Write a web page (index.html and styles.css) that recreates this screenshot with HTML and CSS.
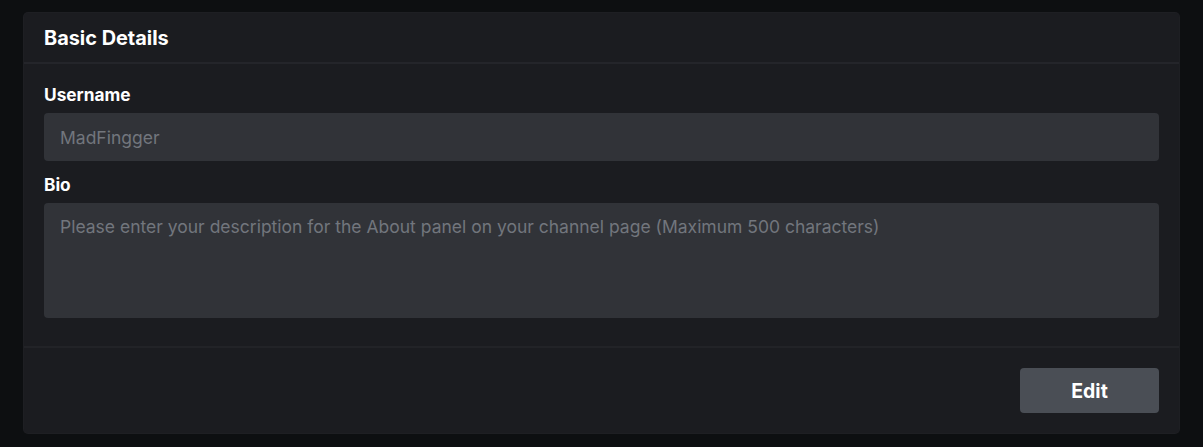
FILE: index.html
```html
<!DOCTYPE html>
<html>
<head>
<meta charset="utf-8">
<link rel="stylesheet" href="styles.css">
</head>
<body>
<section class="card">
  <header class="card-head">
    <h2 class="card-title">Basic Details</h2>
  </header>
  <div class="card-body">
    <label class="field-label" for="username">Username</label>
    <input class="field-input" id="username" type="text" placeholder="MadFingger">
    <label class="field-label bio-label" for="bio">Bio</label>
    <textarea class="field-area" id="bio" placeholder="Please enter your description for the About panel on your channel page (Maximum 500 characters)"></textarea>
  </div>
  <footer class="card-foot">
    <button class="btn-edit" type="button">Edit</button>
  </footer>
</section>
</body>
</html>
```
FILE: styles.css
```css
html, body {
  margin: 0;
  padding: 0;
  background: #0d0f11;
}
body {
  padding: 13px 24px 14px;
  font-family: Inter, "Noto Sans", sans-serif;
  color: #fff;
}
.card {
  background: #1b1c20;
  border-radius: 4px;
  box-shadow: 0 0 0 1px #1e1f23;
}
.card-head {
  height: 49px;
  display: flex;
  align-items: center;
  padding: 0 20px;
  border-bottom: 2px solid #24252a;
}
.card-title {
  margin: 0;
  font-size: 19.9px;
  font-weight: 700;
}
.card-body {
  display: flex;
  flex-direction: column;
  padding: 21px 20px 28px;
  border-bottom: 2px solid #222327;
}
.field-label {
  font-size: 17.3px;
  font-weight: 700;
  line-height: 20px;
  margin-bottom: 8px;
}
.bio-label {
  margin-top: 14px;
}
.field-input, .field-area {
  box-sizing: border-box;
  width: 100%;
  border: none;
  outline: none;
  border-radius: 4px;
  background: #313338;
  color: #d0d2d6;
  font-family: inherit;
  font-size: 17.5px;
  padding: 0 16px;
  margin: 0;
}
.field-input {
  height: 48px;
}
.field-area {
  height: 115px;
  padding-top: 14px;
  resize: none;
  line-height: 20px;
}
.field-input::placeholder, .field-area::placeholder {
  color: #72767d;
  opacity: 1;
}
.card-foot {
  display: flex;
  justify-content: flex-end;
  padding: 20px 20px 20px;
}
.btn-edit {
  width: 139px;
  height: 45px;
  border: none;
  border-radius: 4px;
  background: #4a4e55;
  color: #fff;
  font-family: inherit;
  font-size: 19.5px;
  font-weight: 700;
}
```
